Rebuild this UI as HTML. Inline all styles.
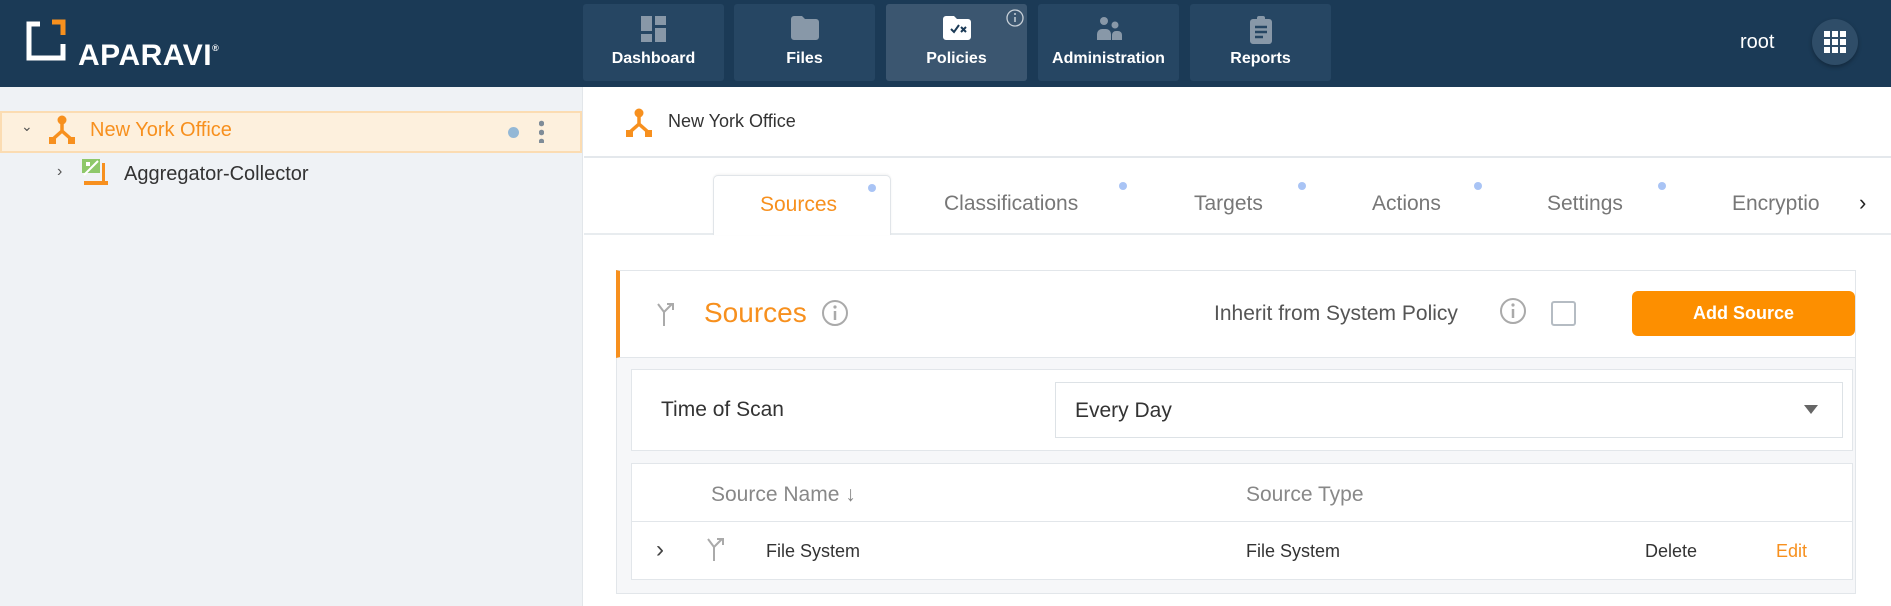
<!DOCTYPE html>
<html><head><meta charset="utf-8"><style>
*{box-sizing:border-box;margin:0;padding:0}
body{width:1891px;height:606px;overflow:hidden;font-family:"Liberation Sans",sans-serif;background:#fff;position:relative}
.abs{position:absolute}
.hdr{left:0;top:0;width:1891px;height:87px;background:#1b3a56}
.nav{top:4px;height:77px;width:141px;background:#264663;border-radius:3px;color:#fff;font-size:16px;font-weight:bold;text-align:center}
.nav svg{position:absolute;left:50%;top:12px;transform:translateX(-50%)}
.nav span{position:absolute;left:0;right:0;top:46px}
.side{left:0;top:87px;width:583px;height:519px;background:#eff2f5;border-right:1px solid #e2e6ea}
.t{white-space:nowrap}
.dot{width:8px;height:8px;border-radius:50%;background:#a9c4f5}
</style></head><body>
<div class="abs hdr"></div>
<!-- logo -->
<svg class="abs" style="left:25px;top:18px" width="44" height="44" viewBox="0 0 44 44"><path d="M15 6H4V40H38V26" fill="none" stroke="#fff" stroke-width="5"/><path d="M27 4H38V17" fill="none" stroke="#f7901e" stroke-width="5"/></svg>
<div class="abs t" style="left:78px;top:34px;color:#fff;font-size:30px;font-weight:bold;letter-spacing:0.5px;line-height:28px">APARAVI<sup style="font-size:9px;vertical-align:14px">®</sup></div>

<div class="abs nav" style="left:583px"><svg width="26" height="26" viewBox="0 0 26 26" fill="#8898a8"><rect x="0" y="0" width="11" height="15"/><rect x="14" y="0" width="11" height="9"/><rect x="0" y="18" width="11" height="8"/><rect x="14" y="12" width="11" height="14"/></svg><span>Dashboard</span></div>
<div class="abs nav" style="left:734px"><svg width="28" height="24" viewBox="0 0 28 24" fill="#8898a8"><path d="M0 3a3 3 0 0 1 3-3h8l3 3h11a3 3 0 0 1 3 3v15a3 3 0 0 1-3 3H3a3 3 0 0 1-3-3z"/></svg><span>Files</span></div>
<div class="abs nav" style="left:886px;background:#3b5670"><svg width="28" height="24" viewBox="0 0 28 24"><path d="M0 3a3 3 0 0 1 3-3h8l3 3h11a3 3 0 0 1 3 3v15a3 3 0 0 1-3 3H3a3 3 0 0 1-3-3z" fill="#fff"/><path d="M8 13l3 3 5-7M18 11l5 5M23 11l-5 5" stroke="#1b3a56" stroke-width="2" fill="none"/></svg><span>Policies</span>
<svg style="left:120px;top:5px;transform:none" width="18" height="18" viewBox="0 0 18 18"><circle cx="9" cy="9" r="8" fill="none" stroke="#c8d0d8" stroke-width="1.3"/><path d="M9 8v5" stroke="#c8d0d8" stroke-width="1.5"/><circle cx="9" cy="5" r="1" fill="#c8d0d8"/></svg></div>
<div class="abs nav" style="left:1038px"><svg width="28" height="24" viewBox="0 0 28 24" fill="#8898a8"><circle cx="9" cy="5" r="4"/><circle cx="20" cy="9" r="3.5"/><path d="M2 24v-6a5 5 0 0 1 5-5h4a5 5 0 0 1 5 5v6z"/><path d="M17 24v-5a4 4 0 0 1 4-4h2a4 4 0 0 1 4 4v5z"/></svg><span>Administration</span></div>
<div class="abs nav" style="left:1190px"><svg width="22" height="28" viewBox="0 0 22 28" fill="#8898a8"><rect x="0" y="3" width="22" height="25" rx="3"/><rect x="7" y="0" width="8" height="6" rx="2"/><path d="M5 11h12M5 16h12M5 21h8" stroke="#264663" stroke-width="2.5"/></svg><span>Reports</span></div>

<div class="abs t" style="left:1740px;top:31px;color:#fff;font-size:20px">root</div>
<div class="abs" style="left:1812px;top:19px;width:46px;height:46px;border-radius:50%;background:#2f4d68;box-shadow:0 2px 4px rgba(0,0,0,.3)"></div>
<svg class="abs" style="left:1824px;top:31px" width="22" height="22" viewBox="0 0 22 22" fill="#fff"><rect x="0" y="0" width="6" height="6"/><rect x="8" y="0" width="6" height="6"/><rect x="16" y="0" width="6" height="6"/><rect x="0" y="8" width="6" height="6"/><rect x="8" y="8" width="6" height="6"/><rect x="16" y="8" width="6" height="6"/><rect x="0" y="16" width="6" height="6"/><rect x="8" y="16" width="6" height="6"/><rect x="16" y="16" width="6" height="6"/></svg>

<!-- sidebar -->
<div class="abs side"></div>
<div class="abs" style="left:0;top:111px;width:582px;height:42px;background:#fdf0dd;border:2px solid #fbdcb2"></div>
<div class="abs t" style="left:21px;top:118px;color:#555;font-size:14px">⌄</div>
<svg class="abs" style="left:48px;top:115px" width="28" height="30" viewBox="0 0 28 30" fill="#f7901e"><circle cx="14" cy="5" r="4.5"/><path d="M14 8v8M14 16l-9 8M14 16l9 8" stroke="#f7901e" stroke-width="3.5" fill="none"/><rect x="1" y="22" width="7" height="7"/><rect x="20" y="22" width="7" height="7"/></svg>
<div class="abs t" style="left:90px;top:119px;color:#f7901e;font-size:20px">New York Office</div>
<div class="abs" style="left:508px;top:127px;width:11px;height:11px;border-radius:50%;background:#94b8d6"></div>
<div class="abs" style="left:539px;top:119px;width:5px;height:24px;background:radial-gradient(circle,#7f8c98 2.5px,transparent 3px) 0 0/5px 9px repeat-y"></div>
<div class="abs t" style="left:57px;top:163px;color:#555;font-size:16px">›</div>
<svg class="abs" style="left:82px;top:159px" width="28" height="28" viewBox="0 0 28 28"><rect x="0" y="0" width="18" height="14" fill="#8ec86a"/><rect x="4" y="3" width="4" height="4" fill="#fff"/><path d="M20 4v18H2v4h24v-4h-3V4z" fill="#f7901e"/><path d="M2 16l14-14" stroke="#fff" stroke-width="2"/></svg>
<div class="abs t" style="left:124px;top:163px;color:#333;font-size:20px">Aggregator-Collector</div>

<!-- breadcrumb -->
<svg class="abs" style="left:625px;top:108px" width="28" height="30" viewBox="0 0 28 30" fill="#f7901e"><circle cx="14" cy="5" r="4.5"/><path d="M14 8v8M14 16l-9 8M14 16l9 8" stroke="#f7901e" stroke-width="3.5" fill="none"/><rect x="1" y="22" width="7" height="7"/><rect x="20" y="22" width="7" height="7"/></svg>
<div class="abs t" style="left:668px;top:111px;color:#333;font-size:18px">New York Office</div>
<div class="abs" style="left:584px;top:156px;width:1307px;height:2px;background:#e4e8ec"></div>

<!-- tabs -->
<div class="abs" style="left:584px;top:233px;width:1307px;height:2px;background:#e8ecef"></div>
<div class="abs" style="left:713px;top:175px;width:178px;height:60px;background:#fff;border:1px solid #e1e5e9;border-bottom:none;border-radius:5px 5px 0 0;box-shadow:0 -1px 2px rgba(0,0,0,.05)"></div>
<div class="abs t" style="left:760px;top:193px;color:#f7901e;font-size:21px">Sources</div>
<div class="abs dot" style="left:868px;top:184px"></div>
<div class="abs t" style="left:944px;top:192px;color:#777;font-size:21px">Classifications</div>
<div class="abs dot" style="left:1119px;top:182px"></div>
<div class="abs t" style="left:1194px;top:192px;color:#777;font-size:21px">Targets</div>
<div class="abs dot" style="left:1298px;top:182px"></div>
<div class="abs t" style="left:1372px;top:192px;color:#777;font-size:21px">Actions</div>
<div class="abs dot" style="left:1474px;top:182px"></div>
<div class="abs t" style="left:1547px;top:192px;color:#777;font-size:21px">Settings</div>
<div class="abs dot" style="left:1658px;top:182px"></div>
<div class="abs t" style="left:1732px;top:192px;color:#777;font-size:21px;width:88px;overflow:hidden">Encryption</div>
<div class="abs t" style="left:1859px;top:190px;color:#222;font-size:22px">›</div>

<!-- panel -->
<div class="abs" style="left:616px;top:270px;width:1240px;height:324px;background:#f6f7f9;border:1px solid #e2e6ea"></div>
<div class="abs" style="left:616px;top:270px;width:1240px;height:88px;background:#fff;border:1px solid #e2e6ea;border-left:4px solid #f7901e"></div>
<svg class="abs" style="left:655px;top:302px" width="22" height="24" viewBox="0 0 22 24" fill="none" stroke="#aaa" stroke-width="2"><path d="M3 2l6 8v14M9 10l8-8M12 2h6v6"/></svg>
<div class="abs t" style="left:704px;top:297px;color:#f7901e;font-size:28px">Sources</div>
<svg class="abs" style="left:821px;top:299px" width="28" height="28" viewBox="0 0 28 28"><circle cx="14" cy="14" r="12" fill="none" stroke="#aaa" stroke-width="2"/><path d="M14 12v9" stroke="#aaa" stroke-width="2.5"/><circle cx="14" cy="8" r="1.6" fill="#aaa"/></svg>
<div class="abs t" style="left:1214px;top:302px;color:#555;font-size:21px">Inherit from System Policy</div>
<svg class="abs" style="left:1499px;top:297px" width="28" height="28" viewBox="0 0 28 28"><circle cx="14" cy="14" r="12" fill="none" stroke="#aaa" stroke-width="2"/><path d="M14 12v9" stroke="#aaa" stroke-width="2.5"/><circle cx="14" cy="8" r="1.6" fill="#aaa"/></svg>
<div class="abs" style="left:1551px;top:301px;width:25px;height:25px;border:2px solid #b5bcc3;border-radius:3px"></div>
<div class="abs" style="left:1632px;top:291px;width:223px;height:45px;background:#fd8f00;border-radius:6px;color:#fff;font-size:18px;font-weight:bold;text-align:center;line-height:45px">Add Source</div>

<div class="abs" style="left:631px;top:369px;width:1222px;height:82px;background:#fff;border:1px solid #e2e6ea"></div>
<div class="abs t" style="left:661px;top:398px;color:#333;font-size:21px">Time of Scan</div>
<div class="abs" style="left:1055px;top:382px;width:788px;height:56px;border:1px solid #dde2e6;background:#fff"></div>
<div class="abs t" style="left:1075px;top:399px;color:#333;font-size:21px">Every Day</div>
<svg class="abs" style="left:1804px;top:405px" width="14" height="9" viewBox="0 0 14 9"><path d="M0 0h14L7 9z" fill="#666"/></svg>

<div class="abs" style="left:631px;top:463px;width:1222px;height:117px;background:#fff;border:1px solid #e2e6ea"></div>
<div class="abs" style="left:632px;top:521px;width:1220px;height:1px;background:#e2e6ea"></div>
<div class="abs t" style="left:711px;top:483px;color:#888;font-size:21px">Source Name ↓</div>
<div class="abs t" style="left:1246px;top:483px;color:#888;font-size:21px">Source Type</div>
<div class="abs t" style="left:656px;top:536px;color:#444;font-size:24px">›</div>
<svg class="abs" style="left:705px;top:537px" width="22" height="24" viewBox="0 0 22 24" fill="none" stroke="#aaa" stroke-width="2"><path d="M3 2l6 8v14M9 10l8-8M12 2h6v6"/></svg>
<div class="abs t" style="left:766px;top:541px;color:#333;font-size:18px">File System</div>
<div class="abs t" style="left:1246px;top:541px;color:#333;font-size:18px">File System</div>
<div class="abs t" style="left:1645px;top:541px;color:#333;font-size:18px">Delete</div>
<div class="abs t" style="left:1776px;top:541px;color:#f7901e;font-size:18px">Edit</div>
</body></html>
